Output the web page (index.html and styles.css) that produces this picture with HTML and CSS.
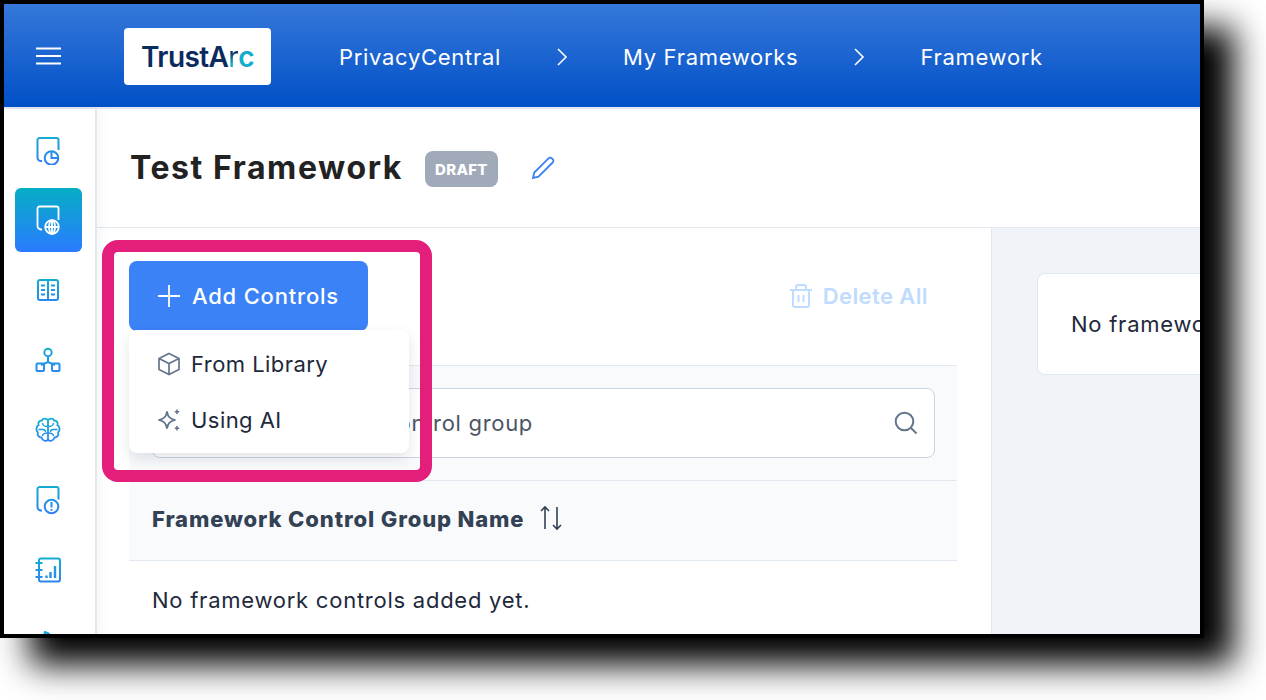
FILE: index.html
```html
<!DOCTYPE html>
<html lang="en">
<head>
  <meta charset="UTF-8">
  <title>Test Framework</title>
  <link rel="stylesheet" href="styles.css">
</head>
<body>
  <!-- Shared icon gradient -->
  <svg class="defs" width="0" height="0">
    <defs>
      <linearGradient id="ico" gradientUnits="userSpaceOnUse" x1="0" y1="0" x2="0" y2="28">
        <stop offset="0" stop-color="#12aed0"/>
        <stop offset="1" stop-color="#2f80f6"/>
      </linearGradient>
    </defs>
  </svg>

  <div class="window">
    <!-- Top bar -->
    <header class="topbar">
      <svg class="burger" width="26" height="18" viewBox="0 0 26 18"><path d="M0 1.500h25M0 9h25M0 16.500h25" stroke="#fff" stroke-width="2" fill="none"/></svg>
      <div class="logo">TrustA<span class="logo-r">r</span><span class="logo-c">c</span></div>
      <nav class="crumbs">
        <span>PrivacyCentral</span>
        <svg width="12" height="18" viewBox="0 0 12 18"><path d="M2 1l8 8-8 8" stroke="#fff" stroke-width="1.600" fill="none"/></svg>
        <span>My Frameworks</span>
        <svg width="12" height="18" viewBox="0 0 12 18"><path d="M2 1l8 8-8 8" stroke="#fff" stroke-width="1.600" fill="none"/></svg>
        <span>Framework</span>
      </nav>
    </header>

    <div class="body">
      <!-- Sidebar -->
      <aside class="sidebar">
        <div class="side-item">
          <svg width="24" height="30" viewBox="0 0 24 30" fill="none" stroke="url(#ico)" stroke-width="2"><path d="M6 26H5a3.500 3.500 0 0 1-3.500-3.500V5a2 2 0 0 1 2-2h17a2 2 0 0 1 2 2v10"/><circle cx="15.500" cy="23" r="6.800"/><path d="M15.500 16.500V23h6.500"/></svg>
        </div>
        <div class="side-item active">
          <svg width="24" height="30" viewBox="0 0 24 30" fill="none" stroke="#fff" stroke-width="1.800"><path d="M6 24.500H5a3.500 3.500 0 0 1-3.500-3.500V3.500a2 2 0 0 1 2-2h17a2 2 0 0 1 2 2V15"/><circle cx="16" cy="22" r="6.800"/><path d="M9.500 22h13M16 15.500v13"/><ellipse cx="16" cy="22" rx="3" ry="6.800"/></svg>
        </div>
        <div class="side-item">
          <svg width="24" height="24" viewBox="0 0 24 24" fill="none" stroke="url(#ico)" stroke-width="2"><rect x="2" y="2" width="20" height="20" rx="2"/><path d="M12 2v20M5 7.500h4M5 12h4M5 16.500h4M15 7.500h4M15 12h4M15 16.500h4"/></svg>
        </div>
        <div class="side-item">
          <svg width="26" height="26" viewBox="0 0 26 26" fill="none" stroke="url(#ico)" stroke-width="2"><circle cx="13" cy="5.500" r="3.700"/><path d="M13 9.500v5.500M6 18l7-3 7 3"/><rect x="1.500" y="16.500" width="7.500" height="7.500" rx="1"/><rect x="17" y="16.500" width="7.500" height="7.500" rx="1"/></svg>
        </div>
        <div class="side-item">
          <svg width="26" height="26" viewBox="0 0 26 26" fill="none" stroke="url(#ico)" stroke-width="1.800"><path d="M13 2.500v21"/><path d="M13 3.500C11.500 1 8 1 6.800 3.500 4 3.500 2.800 6 3.600 8 1 9.500.8 13.500 2.800 15.500 2 18.500 4 20.500 6.500 20.500 7.500 24 11.500 25 13 22.500"/><path d="M13 3.500C14.500 1 18 1 19.200 3.500 22 3.500 23.200 6 22.400 8 25 9.500 25.200 13.500 23.200 15.500 24 18.500 22 20.500 19.500 20.500 18.500 24 14.500 25 13 22.500"/><path d="M7.500 6c0 2 1.500 3.500 5.500 3.500M3.500 12.500H8c1.500 0 2.500 1 2.500 2.500M7.500 19c0-2 2-3 5.500-3M18.500 6c0 2-1.500 3.500-5.500 3.500M22.500 12.500H18c-1.500 0-2.500 1-2.500 2.500M18.500 19c0-2-2-3-5.500-3" stroke-width="1.300"/></svg>
        </div>
        <div class="side-item">
          <svg width="24" height="30" viewBox="0 0 24 30" fill="none" stroke="url(#ico)" stroke-width="2"><path d="M6 25.500H5A3.500 3.500 0 0 1 1.500 22V4a2 2 0 0 1 2-2h17a2 2 0 0 1 2 2v10.500"/><circle cx="15.500" cy="21.500" r="6.800"/><path d="M15.500 17v5.500M15.500 24v1.800"/></svg>
        </div>
        <div class="side-item">
          <svg width="26" height="26" viewBox="0 0 26 26" fill="none" stroke="url(#ico)" stroke-width="2"><rect x="4" y="1.500" width="21" height="23" rx="2"/><path d="M.5 6h7M.5 13h7M.5 20h7" stroke-width="2.200"/><path d="M11.500 21v-2.500M15.500 21v-6M20 21V9" stroke-width="2.400"/></svg>
        </div>
        <div class="side-item">
          <svg width="24" height="24" viewBox="0 0 24 24" fill="none" stroke="url(#ico)" stroke-width="2"><path d="M8 7l1-3 3 1 8 8-3 3zM8 7L5 20"/></svg>
        </div>
      </aside>

      <!-- Main content -->
      <main class="main">
        <div class="page-head">
          <h1>Test Framework</h1>
          <span class="badge">DRAFT</span>
          <svg class="pencil" width="24" height="24" viewBox="0 0 24 24" fill="none" stroke="#3b82f6" stroke-width="1.800"><path d="M2 22l1.300-5.500L17.500 2.300a2.400 2.400 0 0 1 3.400 0l.8.8a2.400 2.400 0 0 1 0 3.400L7.500 20.700z"/></svg>
        </div>

        <div class="content">
          <section class="left">
            <div class="toolbar">
              <button class="add-btn">
                <svg width="22" height="22" viewBox="0 0 22 22"><path d="M11 0v22M0 11h22" stroke="#fff" stroke-width="1.800"/></svg>
                Add Controls
              </button>
              <div class="delete-all">
                <svg width="22" height="24" viewBox="0 0 22 24" fill="none" stroke="#bfdbfe" stroke-width="2"><path d="M0 6h22M6 6V3a2 2 0 0 1 2-2h6a2 2 0 0 1 2 2v3M3 6v15a2 2 0 0 0 2 2h12a2 2 0 0 0 2-2V6M8.500 11v7M13.500 11v7"/></svg>
                Delete All
              </div>
              <ul class="add-menu">
                <li>
                  <svg width="24" height="24" viewBox="0 0 24 24" fill="none" stroke="#64748b" stroke-width="1.700"><path d="M12 1.500l10 5v11l-10 5-10-5v-11zM2 6.500l10 5 10-5M12 11.500v11"/></svg>
                  From Library
                </li>
                <li>
                  <svg width="24" height="24" viewBox="0 0 24 24" fill="none" stroke="#64748b" stroke-width="1.700"><path d="M10 3.500c.9 5.500 3 7.600 8.500 8.500-5.500.9-7.600 3-8.500 8.500C9.100 15 7 12.900 1.500 12 7 11.100 9.100 9 10 3.500z"/><path d="M20 1.500v4.500M17.800 3.700h4.400M20 18v4.500M17.800 20.200h4.400" stroke-width="1.500"/></svg>
                  Using AI
                </li>
              </ul>
            </div>

            <div class="table">
              <div class="search-row">
                <div class="search">
                  <span>Search framework control group</span>
                  <svg width="24" height="24" viewBox="0 0 24 24" fill="none" stroke="#64748b" stroke-width="2"><circle cx="10.500" cy="10.500" r="8.800"/><path d="M17 17l5.500 5.500"/></svg>
                </div>
              </div>
              <div class="head-row">
                <span>Framework Control Group Name</span>
                <svg width="24" height="26" viewBox="0 0 24 26" fill="none" stroke="#334155" stroke-width="1.600"><path d="M6 24V2M2 6l4-4 4 4M18 2v22M14 20l4 4 4-4"/></svg>
              </div>
              <div class="empty-row">No framework controls added yet.</div>
            </div>
          </section>

          <aside class="right">
            <div class="note">No framework controls added yet.</div>
          </aside>
        </div>
      </main>
    </div>

    <!-- Annotation frame drawn on the screenshot -->
    <div class="callout"></div>
  </div>
</body>
</html>
```

FILE: styles.css
```css
/* General */
html, body {
  margin: 0;
  height: 700px;
  background: #fff;
  overflow: hidden;
}

body {
  font-family: Inter, "Noto Sans", sans-serif;
  color: #1e293b;
}

.defs {
  position: absolute;
}

/* Screenshot frame with its heavy shadow */
.window {
  position: relative;
  width: 1196px;
  height: 630px;
  border: 4px solid #000;
  box-shadow: 30px 27px 32px 0 #000;
  overflow: hidden;
  display: flex;
  flex-direction: column;
  background: #fff;
}

/* Top bar */
.topbar {
  flex: 0 0 103px;
  box-sizing: border-box;
  display: flex;
  align-items: center;
  padding: 2px 0 0 32px;
  background: linear-gradient(180deg, #3678da 0%, #0150c7 100%);
  color: #fff;
}

.burger {
  margin: 0 62px 2px 0;
}

.logo {
  width: 147px;
  height: 57px;
  background: #fff;
  border-radius: 4px;
  display: flex;
  align-items: center;
  justify-content: center;
  font-size: 28px;
  font-weight: 600;
  letter-spacing: -0.6px;
  color: #0b2a5e;
}

.logo-r {
  font-weight: 400;
  color: transparent;
  background: linear-gradient(180deg, #0b2a5e 35%, #12aecb 70%);
  -webkit-background-clip: text;
  background-clip: text;
}

.logo-c {
  color: #12aecb;
}

.crumbs {
  display: flex;
  align-items: center;
  margin-left: 68px;
  font-size: 22px;
  letter-spacing: 0.7px;
  gap: 55px;
}

/* Body */
.body {
  flex: 1;
  display: flex;
  min-height: 0;
  border-top: 2px solid #e2e8f0;
}

.sidebar {
  position: relative;
  flex: 0 0 93px;
  box-sizing: border-box;
  border-right: 2px solid #e2e8f0;
  box-shadow: 3px 0 10px rgba(30, 41, 59, 0.05);
  padding: 9px 0 0 11px;
  display: flex;
  flex-direction: column;
  gap: 6px;
  background: #fff;
}

.side-item {
  flex: 0 0 64px;
  width: 67px;
  display: flex;
  align-items: center;
  justify-content: center;
  border-radius: 6px;
}

.side-item svg {
  margin-right: 2px;
}

.side-item.active {
  background: linear-gradient(180deg, #06aec5 0%, #2a7bff 100%);
}

/* Main */
.main {
  flex: 1;
  display: flex;
  flex-direction: column;
  min-width: 0;
}

.page-head {
  flex: 0 0 118px;
  display: flex;
  align-items: center;
  padding-left: 33px;
  border-bottom: 1px solid #e2e8f0;
}

.page-head h1 {
  margin: 0 0 2px;
  font-size: 32px;
  font-weight: 700;
  letter-spacing: 1.58px;
  color: #222;
}

.badge {
  margin: 2px 0 0 22px;
  width: 73px;
  height: 36px;
  display: flex;
  align-items: center;
  justify-content: center;
  background: #a0aab9;
  border-radius: 8px;
  color: #fff;
  font-size: 15px;
  font-weight: 800;
  letter-spacing: 0.3px;
}

.pencil {
  margin-left: 33px;
}

.content {
  flex: 1;
  display: flex;
  min-height: 0;
}

.left {
  flex: 0 0 895px;
  padding: 33px 34px 0 32px;
  box-sizing: border-box;
  border-right: 1px solid #e2e8f0;
}

.toolbar {
  position: relative;
  display: flex;
  align-items: center;
  justify-content: space-between;
  padding-right: 29px;
  margin-bottom: 34px;
}

.add-btn {
  width: 239px;
  height: 70px;
  display: flex;
  align-items: center;
  justify-content: center;
  gap: 12px;
  background: #3b82f6;
  border: none;
  border-radius: 8px;
  color: #fff;
  font: 500 22px Inter, sans-serif;
  letter-spacing: 0.8px;
}

.delete-all {
  display: flex;
  align-items: center;
  gap: 11px;
  color: #bfdbfe;
  font-size: 22px;
  font-weight: 600;
  letter-spacing: 0.4px;
}

/* Dropdown under the button */
.add-menu {
  position: absolute;
  z-index: 2;
  top: 69px;
  left: 0;
  width: 280px;
  height: 123px;
  margin: 0;
  padding: 6px 0 0;
  box-sizing: border-box;
  list-style: none;
  background: #fff;
  border-radius: 8px;
  box-shadow: 0 6px 14px rgba(30, 41, 59, 0.12);
  font-size: 22px;
  letter-spacing: 0.45px;
}

.add-menu li {
  height: 56px;
  display: flex;
  align-items: center;
  gap: 10px;
  padding-left: 28px;
}

/* Table */
.table {
  border-top: 1px solid #e2e8f0;
}

.search-row {
  padding: 22px 22px 22px 23px;
  background: #f8fafc;
  border-bottom: 1px solid #e2e8f0;
}

.search {
  height: 68px;
  display: flex;
  align-items: center;
  justify-content: space-between;
  padding: 0 16px 0 22px;
  background: #fff;
  border: 1px solid #cbd5e1;
  border-radius: 8px;
  font-size: 22px;
  letter-spacing: 0.7px;
  color: #4b5563;
}

.head-row {
  height: 80px;
  box-sizing: border-box;
  display: flex;
  align-items: center;
  gap: 15px;
  padding: 0 0 3px 23px;
  background: #f8fafc;
  border-bottom: 1px solid #e2e8f0;
  font-size: 22px;
  font-weight: 800;
  letter-spacing: 0.87px;
  color: #334155;
}

.head-row svg {
  margin-bottom: 3px;
}

.empty-row {
  padding: 26px 23px;
  font-size: 22px;
  letter-spacing: 0.75px;
}

/* Right panel */
.right {
  flex: 1;
  min-width: 0;
  background: #f0f4f8;
  padding: 45px 0 0 45px;
}

.note {
  height: 100px;
  display: flex;
  align-items: center;
  padding-left: 33px;
  background: #fff;
  border: 1px solid #e2e8f0;
  border-right: none;
  border-radius: 8px 0 0 8px;
  font-size: 22px;
  letter-spacing: 0.75px;
  white-space: nowrap;
  overflow: hidden;
}

/* Annotation */
.callout {
  position: absolute;
  z-index: 3;
  left: 98px;
  top: 236px;
  width: 306px;
  height: 218px;
  border: 12px solid #e41f7b;
  border-radius: 16px;
  pointer-events: none;
}
```
